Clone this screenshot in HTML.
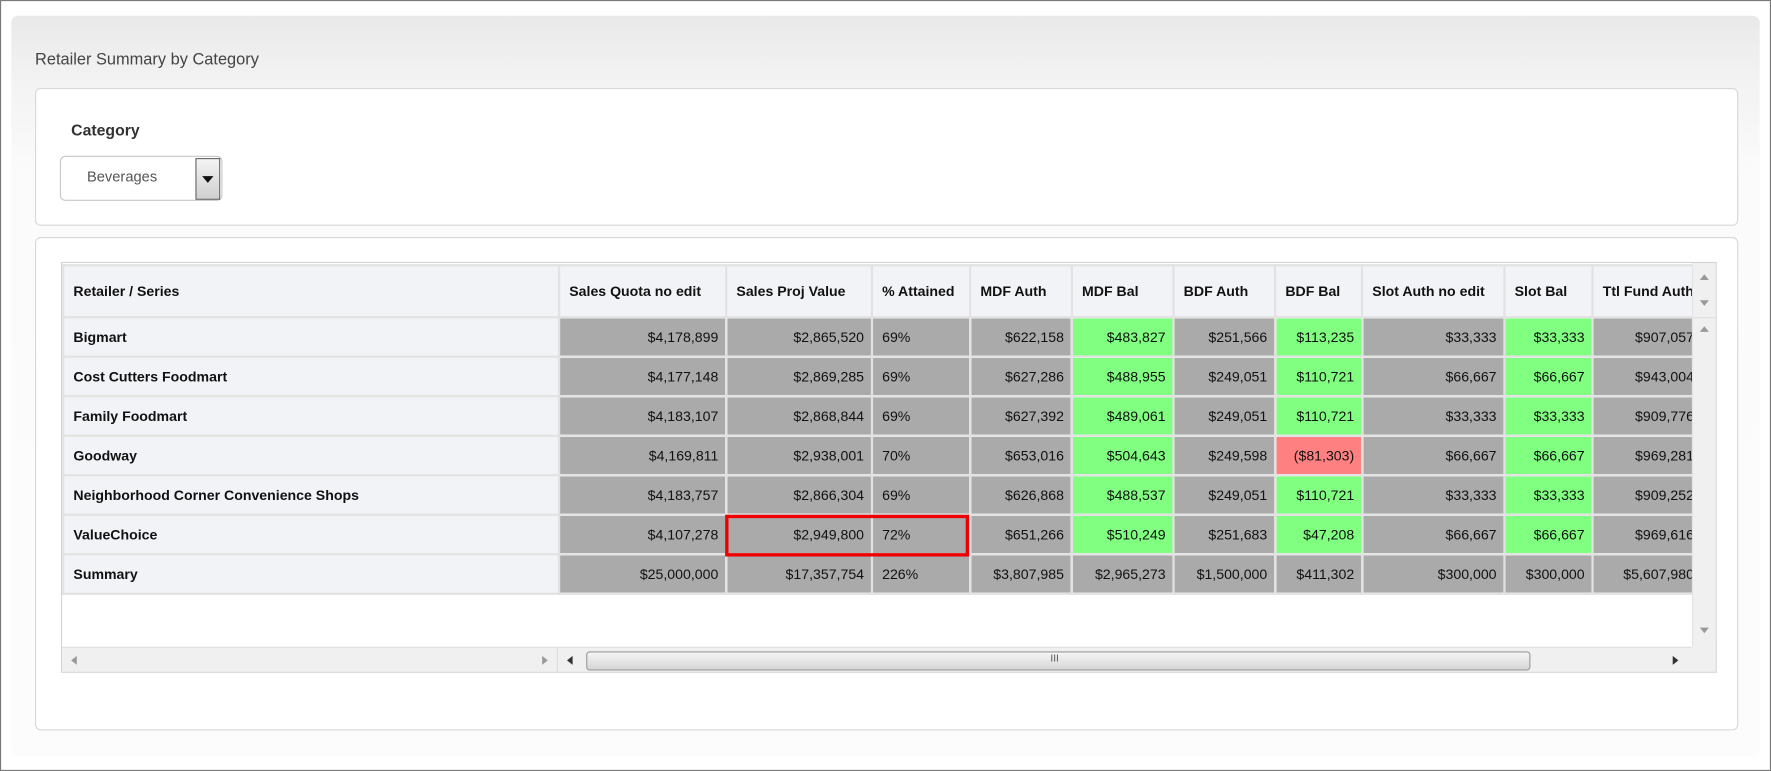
<!DOCTYPE html>
<html><head><meta charset="utf-8"><style>
html,body{margin:0;padding:0;background:#fff;overflow:hidden;}
body{width:1771px;height:771px;}
#w{position:absolute;left:0;top:0;width:1568px;height:683px;transform:scale(1.12946,1.12885);transform-origin:0 0;font-family:"Liberation Sans",Arial,sans-serif;}
#frame{position:absolute;left:0;top:0;width:1566px;height:681px;border:1px solid #7a7a7a;background:#fff;}
#outer{position:absolute;left:10px;top:14px;width:1548px;height:656px;border-radius:6px;background:linear-gradient(#e9e9e9 0,#f3f3f3 60px,#fbfbfb 140px,#fcfcfc 100%);}
.title{position:absolute;left:31px;top:45px;font-size:14.5px;color:#444;}
.panel{position:absolute;left:31px;width:1506px;background:#fff;border:1px solid #d8d8d8;border-radius:5px;}
.lbl{position:absolute;left:63px;top:107px;font-size:14px;font-weight:bold;color:#333;}
.dd{position:absolute;left:53px;top:138px;width:142px;height:38px;border:1px solid #c8c8c8;border-radius:5px;background:#fff;}
.dd span{position:absolute;left:23px;top:10px;font-size:13px;color:#555;}
.dd .btn{position:absolute;left:119px;top:1px;width:20px;height:35px;border:1px solid #666;background:linear-gradient(#f4f4f4,#cfcfcf);}
.dd .btn:after{content:"";position:absolute;left:5px;top:15px;border-left:5px solid transparent;border-right:5px solid transparent;border-top:6px solid #111;}
#grid{position:absolute;left:54px;top:232px;width:1464px;height:362px;border:1px solid #d4d4d4;background:#fff;overflow:hidden;}
table{position:absolute;left:0;top:1px;border-collapse:collapse;table-layout:fixed;font-size:12.5px;color:#111;}
td{border:2px solid #e2e2e2;height:33px;padding:0 6px;white-space:nowrap;overflow:hidden;text-align:right;background:#aaaaaa;}
tr.h td{height:44px;background:#f2f3f7;font-weight:bold;text-align:left;padding-left:8px;}
td.f{background:#f2f3f7;font-weight:bold;text-align:left;padding-left:8px;}
td.g{background:#80ff80;}
td.r{background:#ff8080;}
td.p{text-align:left;padding-left:8px;}
.vs{position:absolute;left:1443px;top:0;width:21px;height:340px;background:#f0f0f0;border-left:1px solid #e4e4e4;}
.arr{position:absolute;width:0;height:0;border-left:4px solid transparent;border-right:4px solid transparent;}
.up{border-bottom:5px solid #999;}
.dn{border-top:5px solid #999;}
.hs{position:absolute;left:0;top:340px;width:1443px;height:22px;background:#f0f0f0;border-top:1px solid #e0e0e0;}
.thumb{position:absolute;left:464px;top:3px;width:834px;height:15px;border:1px solid #999;border-radius:3px;background:linear-gradient(#f5f5f5,#d6d6d6);}
.red{position:absolute;left:642px;top:456px;width:210px;height:31px;border:3px solid #ee0000;}
</style></head><body><div id="w">
<div id="frame"></div>
<div id="outer"></div>
<div class="title">Retailer Summary by Category</div>
<div class="panel" style="top:78px;height:120px;"></div>
<div class="lbl">Category</div>
<div class="dd"><span>Beverages</span><div class="btn"></div></div>
<div class="panel" style="top:210px;height:435px;"></div>
<div id="grid">
<table>
<colgroup><col style="width:439px"><col style="width:148px"><col style="width:129px"><col style="width:87px"><col style="width:90px"><col style="width:90px"><col style="width:90px"><col style="width:77px"><col style="width:126px"><col style="width:78px"><col style="width:90px"></colgroup>
<tr class="h"><td>Retailer / Series</td><td>Sales Quota no edit</td><td>Sales Proj Value</td><td>% Attained</td><td>MDF Auth</td><td>MDF Bal</td><td>BDF Auth</td><td>BDF Bal</td><td>Slot Auth no edit</td><td>Slot Bal</td><td>Ttl Fund Auth</td></tr>
<tr><td class="f">Bigmart</td><td>$4,178,899</td><td>$2,865,520</td><td class="p">69%</td><td>$622,158</td><td class="g">$483,827</td><td>$251,566</td><td class="g">$113,235</td><td>$33,333</td><td class="g">$33,333</td><td>$907,057</td></tr>
<tr><td class="f">Cost Cutters Foodmart</td><td>$4,177,148</td><td>$2,869,285</td><td class="p">69%</td><td>$627,286</td><td class="g">$488,955</td><td>$249,051</td><td class="g">$110,721</td><td>$66,667</td><td class="g">$66,667</td><td>$943,004</td></tr>
<tr><td class="f">Family Foodmart</td><td>$4,183,107</td><td>$2,868,844</td><td class="p">69%</td><td>$627,392</td><td class="g">$489,061</td><td>$249,051</td><td class="g">$110,721</td><td>$33,333</td><td class="g">$33,333</td><td>$909,776</td></tr>
<tr><td class="f">Goodway</td><td>$4,169,811</td><td>$2,938,001</td><td class="p">70%</td><td>$653,016</td><td class="g">$504,643</td><td>$249,598</td><td class="r">($81,303)</td><td>$66,667</td><td class="g">$66,667</td><td>$969,281</td></tr>
<tr><td class="f">Neighborhood Corner Convenience Shops</td><td>$4,183,757</td><td>$2,866,304</td><td class="p">69%</td><td>$626,868</td><td class="g">$488,537</td><td>$249,051</td><td class="g">$110,721</td><td>$33,333</td><td class="g">$33,333</td><td>$909,252</td></tr>
<tr><td class="f">ValueChoice</td><td>$4,107,278</td><td>$2,949,800</td><td class="p">72%</td><td>$651,266</td><td class="g">$510,249</td><td>$251,683</td><td class="g">$47,208</td><td>$66,667</td><td class="g">$66,667</td><td>$969,616</td></tr>
<tr><td class="f">Summary</td><td>$25,000,000</td><td>$17,357,754</td><td class="p">226%</td><td>$3,807,985</td><td>$2,965,273</td><td>$1,500,000</td><td>$411,302</td><td>$300,000</td><td>$300,000</td><td>$5,607,980</td></tr>
</table>
<div class="vs"><div class="arr up" style="left:6px;top:10px"></div><div class="arr dn" style="left:6px;top:33px"></div><div style="position:absolute;left:0;top:48px;width:21px;border-top:1px solid #ddd"></div><div class="arr up" style="left:6px;top:56px"></div><div class="arr dn" style="left:6px;top:323px"></div></div>
<div class="hs"><div class="arr" style="left:8px;top:7px;border:none;border-top:4px solid transparent;border-bottom:4px solid transparent;border-right:5px solid #999"></div><div class="arr" style="left:425px;top:7px;border:none;border-top:4px solid transparent;border-bottom:4px solid transparent;border-left:5px solid #999"></div><div style="position:absolute;left:438px;top:0;height:22px;border-left:1px solid #ddd"></div><div class="arr" style="left:447px;top:7px;border:none;border-top:4px solid transparent;border-bottom:4px solid transparent;border-right:5px solid #333"></div><div class="thumb"><span style="position:absolute;left:410px;top:0;font-size:9px;color:#555">III</span></div><div class="arr" style="left:1426px;top:7px;border:none;border-top:4px solid transparent;border-bottom:4px solid transparent;border-left:5px solid #333"></div></div>
<div style="position:absolute;left:1443px;top:340px;width:21px;height:22px;background:#f0f0f0"></div>
</div>
<div class="red"></div>
</div></body></html>
